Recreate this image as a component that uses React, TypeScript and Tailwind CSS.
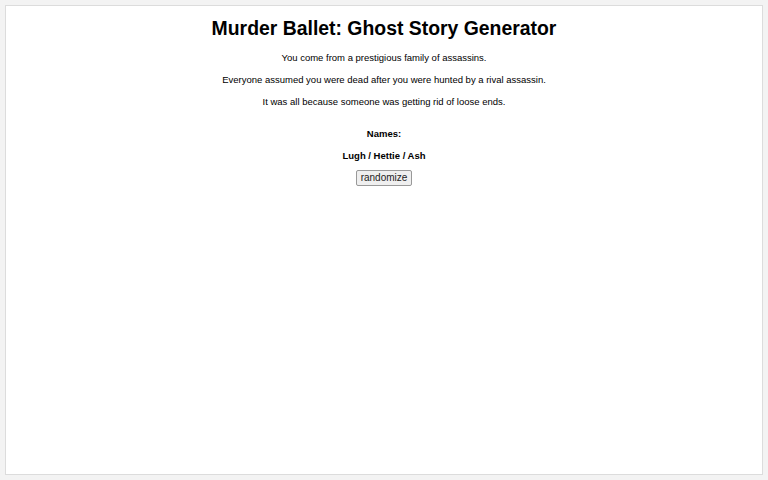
export default function App() {
  return (
    <div className="w-[768px] h-[480px] bg-[#f3f3f3] p-[5px] pb-[5px]" style={{ fontFamily: '"Liberation Sans", Arial, sans-serif' }}>
      <div className="h-[470px] bg-white border border-[#dcdcdc] flex flex-col items-center text-black">
        <h1 className="text-[19.4px] font-bold leading-[24px] mt-[10px]">Murder Ballet: Ghost Story Generator</h1>
        <p className="text-[9.5px] leading-[12px] mt-[12px]">You come from a prestigious family of assassins.</p>
        <p className="text-[9.5px] leading-[12px] mt-[10px]">Everyone assumed you were dead after you were hunted by a rival assassin.</p>
        <p className="text-[9.5px] leading-[12px] mt-[10px]">It was all because someone was getting rid of loose ends.</p>
        <p className="text-[9.5px] leading-[12px] mt-[20px] font-bold">Names:</p>
        <p className="text-[9.5px] leading-[12px] mt-[10px] font-bold">Lugh / Hettie / Ash</p>
        <button className="mt-[8px] text-[10px] leading-[12px] px-[4px] py-[1px] bg-[#efefef] border border-[#999999] rounded-[2px] text-[#222]">randomize</button>
      </div>
    </div>
  );
}
